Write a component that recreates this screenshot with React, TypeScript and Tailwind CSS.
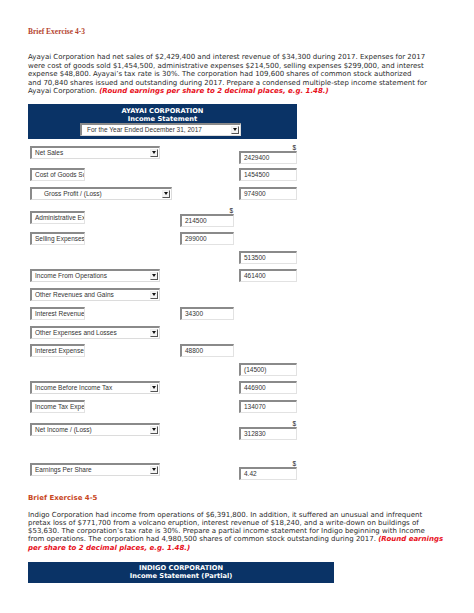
import type { ReactNode } from "react";

type Cell =
  | { kind: "select"; label: string; width?: number; indent?: boolean; mt?: number }
  | { kind: "input"; value: string; width?: number; dollar?: boolean; mt?: number };

type Row = { h: number; left?: Cell; mid?: Cell; right?: Cell };

const rows: Row[] = [
  { h: 24, left: { kind: "select", label: "Net Sales", mt: 2 }, right: { kind: "input", value: "2429400", dollar: true } },
  { h: 19, left: { kind: "input", value: "Cost of Goods Sc" }, right: { kind: "input", value: "1454500" } },
  { h: 20, left: { kind: "select", label: "Gross Profit / (Loss)", width: 142, indent: true }, right: { kind: "input", value: "974900" } },
  { h: 25, left: { kind: "input", value: "Administrative Ex", mt: 4 }, mid: { kind: "input", value: "214500", dollar: true } },
  { h: 19, left: { kind: "input", value: "Selling Expenses" }, mid: { kind: "input", value: "299000" } },
  { h: 18, right: { kind: "input", value: "513500" } },
  { h: 19, left: { kind: "select", label: "Income From Operations" }, right: { kind: "input", value: "461400" } },
  { h: 19, left: { kind: "select", label: "Other Revenues and Gains" } },
  { h: 19, left: { kind: "input", value: "Interest Revenue" }, mid: { kind: "input", value: "34300" } },
  { h: 18, left: { kind: "select", label: "Other Expenses and Losses" } },
  { h: 19, left: { kind: "input", value: "Interest Expense" }, mid: { kind: "input", value: "48800" } },
  { h: 18, right: { kind: "input", value: "(14500)" } },
  { h: 19, left: { kind: "select", label: "Income Before Income Tax" }, right: { kind: "input", value: "446900" } },
  { h: 20, left: { kind: "input", value: "Income Tax Expe" }, right: { kind: "input", value: "134070" } },
  { h: 40, left: { kind: "select", label: "Net Income /  (Loss)", mt: 3 }, right: { kind: "input", value: "312830", dollar: true } },
  { h: 20, left: { kind: "select", label: "Earnings Per Share", mt: 3 }, right: { kind: "input", value: "4.42", dollar: true } },
];

function Arrow() {
  return (
    <div className="my-[1px] mr-[1px] flex w-[8px] shrink-0 items-center justify-center border-b border-r border-[#555] border-l border-t border-l-[#eee] border-t-[#eee] bg-[#f4f4f4]">
      <svg width="4" height="3" viewBox="0 0 4 3">
        <path d="M0 0 L4 0 L2 3 Z" fill="#111" />
      </svg>
    </div>
  );
}

function Select({ label, width = 130, indent, mt = 0 }: { label: string; width?: number; indent?: boolean; mt?: number }) {
  return (
    <div
      className="flex h-[13px] items-stretch border-l-2 border-t-2 border-b border-r border-[#8a8a8a] border-b-[#dcdcdc] border-r-[#dcdcdc] bg-white"
      style={{ width, marginTop: mt }}
    >
      <div className={"flex-1 truncate pt-[1px] text-[6.5px] leading-[8px] text-[#333] " + (indent ? "pl-[12px]" : "pl-[3px]")}>
        {label}
      </div>
      <Arrow />
    </div>
  );
}

function Input({ value, width = 55, dollar, mt = 0 }: { value: string; width?: number; dollar?: boolean; mt?: number }) {
  return (
    <div style={{ marginTop: mt, width }}>
      {dollar && <div className="h-[7px] pr-[1px] text-right text-[6.5px] leading-[7px] text-[#222]">$</div>}
      <div className="h-[13px] overflow-hidden whitespace-nowrap border-l-2 border-t-2 border-b border-r border-[#8a8a8a] border-b-[#e2e2e2] border-r-[#e2e2e2] bg-white pl-[3px] pt-[1px] text-[6.5px] leading-[8px] text-[#333]">
        {value}
      </div>
    </div>
  );
}

function renderCell(c?: Cell, w?: number): ReactNode {
  if (!c) return null;
  if (c.kind === "select") return <Select label={c.label} width={c.width} indent={c.indent} mt={c.mt} />;
  return <Input value={c.value} width={c.width ?? w} dollar={c.dollar} mt={c.mt} />;
}

export default function App() {
  return (
    <div className="min-h-[613px] w-[474px] overflow-hidden bg-white px-[28px] font-['DejaVu_Sans',Verdana,sans-serif] text-[#333]">
      <div className="pt-[28px] font-['Liberation_Serif',serif] text-[7.5px] font-bold leading-[8px] text-[#b5442f]">
        Brief Exercise 4-3
      </div>

      <div className="mt-[17px] whitespace-nowrap text-[7px] leading-[8.5px] text-[#2b2b2b]">
        <div>Ayayai Corporation had net sales of $2,429,400 and interest revenue of $34,300 during 2017. Expenses for 2017</div>
        <div>were cost of goods sold $1,454,500, administrative expenses $214,500, selling expenses $299,000, and interest</div>
        <div>expense $48,800. Ayayai’s tax rate is 30%. The corporation had 109,600 shares of common stock authorized</div>
        <div>and 70,840 shares issued and outstanding during 2017. Prepare a condensed multiple-step income statement for</div>
        <div>
          Ayayai Corporation.{" "}
          <span className="font-bold italic text-[#e8101c]">(Round earnings per share to 2 decimal places, e.g. 1.48.)</span>
        </div>
      </div>

      <div className="mt-[8px] flex h-[35px] w-[269px] flex-col items-center bg-[#0a3366] pt-[3px] text-[6.7px] font-bold leading-[8px] text-white">
        <div>AYAYAI CORPORATION</div>
        <div>Income Statement</div>
        <div className="ml-[-4px] flex h-[13px] w-[161px] items-stretch border-l-2 border-t-2 border-b border-r border-[#8a8a8a] border-b-[#dcdcdc] border-r-[#dcdcdc] bg-white font-normal">
          <div className="flex-1 truncate pl-[5px] pt-[1px] font-['Liberation_Sans',Arial,sans-serif] text-[6.5px] leading-[8px] text-[#333]">
            For the Year Ended December 31, 2017
          </div>
          <Arrow />
        </div>
      </div>

      <div className="mt-[5px] font-['Liberation_Sans',Arial,sans-serif]">
        {rows.map((r, i) => (
          <div key={i} className="grid grid-cols-[150px_59px_1fr] pl-[2px]" style={{ height: r.h }}>
            <div>{renderCell(r.left, 55)}</div>
            <div>{renderCell(r.mid, 54)}</div>
            <div>{renderCell(r.right, 58)}</div>
          </div>
        ))}
      </div>

      <div className="mt-[14px] text-[7px] font-bold leading-[8px] text-[#c8471e]">Brief Exercise 4-5</div>

      <div className="mt-[9px] whitespace-nowrap text-[7px] leading-[8.3px] text-[#2b2b2b]">
        <div>Indigo Corporation had income from operations of $6,391,800. In addition, it suffered an unusual and infrequent</div>
        <div>pretax loss of $771,700 from a volcano eruption, interest revenue of $18,240, and a write-down on buildings of</div>
        <div>$53,630. The corporation’s tax rate is 30%. Prepare a partial income statement for Indigo beginning with Income</div>
        <div>
          from operations. The corporation had 4,980,500 shares of common stock outstanding during 2017.{" "}
          <span className="font-bold italic text-[#e8101c]">(Round earnings</span>
        </div>
        <div className="font-bold italic text-[#e8101c]">per share to 2 decimal places, e.g. 1.48.)</div>
      </div>

      <div className="mt-[10px] flex h-[21px] w-[306px] flex-col items-center justify-center bg-[#0a3366] text-[6.7px] font-bold leading-[8px] text-white">
        <div>INDIGO CORPORATION</div>
        <div>Income Statement (Partial)</div>
      </div>
    </div>
  );
}
